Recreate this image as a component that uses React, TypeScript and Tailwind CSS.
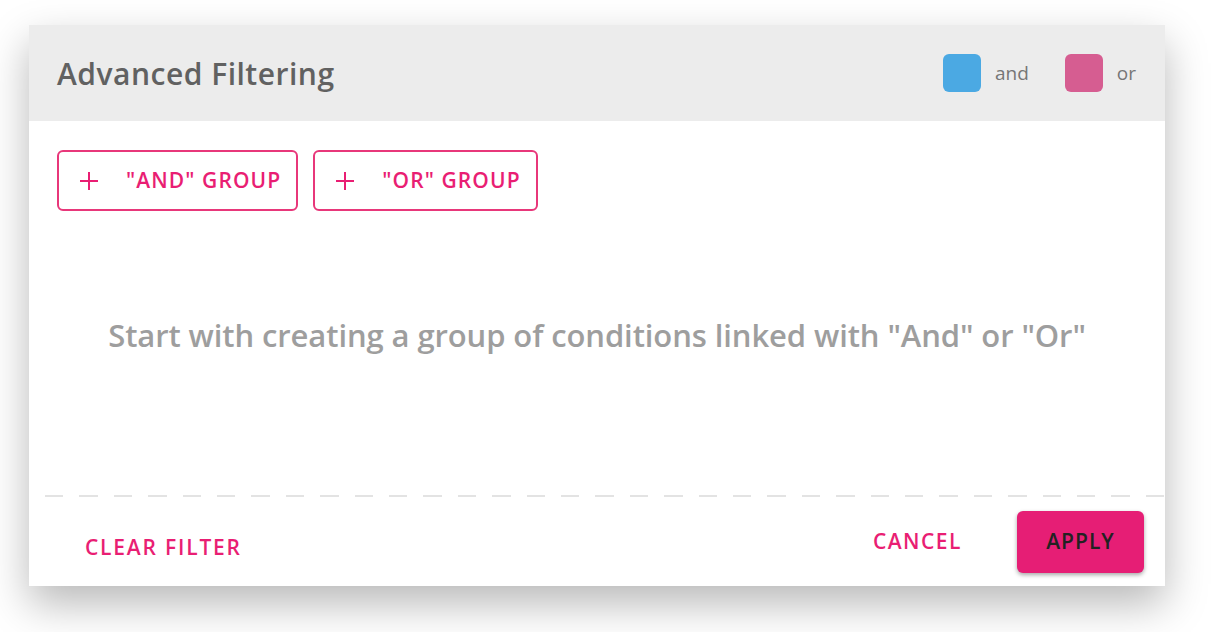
import React from 'react';

const font = { fontFamily: '"Open Sans", "Noto Sans", sans-serif' };

const PlusIcon = () => (
  <svg width="18" height="18" viewBox="0 0 18 18" className="shrink-0">
    <path d="M9 0v18M0 9h18" stroke="currentColor" strokeWidth="2" />
  </svg>
);

const GroupButton = ({ label }: { label: string }) => (
  <button className="flex items-center h-[61px] pl-[21px] pr-[15px] border-2 border-[#e8377a] rounded-[6px] text-[#e91e73] bg-white">
    <PlusIcon />
    <span className="ml-[28px] text-[21px] font-semibold tracking-[1.1px] leading-none">{label}</span>
  </button>
);

export default function App() {
  return (
    <div className="w-[1220px] h-[632px] bg-white pl-[29px] pt-[25px] overflow-hidden" style={font}>
      <div className="w-[1136px] h-[561px] bg-white flex flex-col shadow-[0_18px_40px_rgba(0,0,0,0.28)]">
        {/* header */}
        <div className="h-[96px] bg-[#ececec] flex items-center pl-[28px] pr-[29px]">
          <h1 className="text-[30px] font-semibold text-[#616161] tracking-[0.5px]">Advanced Filtering</h1>
          <div className="ml-auto flex items-center">
            <span className="w-[38px] h-[38px] rounded-[6px] bg-[#4ba9e3]" />
            <span className="ml-[14px] text-[19px] text-[#767676]">and</span>
            <span className="ml-[36px] w-[38px] h-[38px] rounded-[6px] bg-[#d65d91]" />
            <span className="ml-[14px] text-[19px] text-[#767676]">or</span>
          </div>
        </div>

        {/* body */}
        <div className="flex-1 flex flex-col px-[28px] pt-[29px]">
          <div className="flex gap-[15px]">
            <GroupButton label={'"AND" GROUP'} />
            <GroupButton label={'"OR" GROUP'} />
          </div>
          <p className="mt-[101px] text-center text-[31px] font-semibold text-[#9e9e9e] tracking-[-0.1px]">
            Start with creating a group of conditions linked with "And" or "Or"
          </p>
        </div>

        {/* dashed divider */}
        <div className="h-[2px] bg-[repeating-linear-gradient(90deg,transparent_0_16px,#e3e3e3_16px_34.4px)]" />

        {/* footer */}
        <div className="h-[89px] flex items-center pl-[56px] pr-[21px]">
          <button className="mt-[12px] text-[21px] font-semibold tracking-[1.8px] text-[#e91e73]">CLEAR FILTER</button>
          <button className="ml-auto text-[21px] font-semibold tracking-[1.5px] text-[#e91e73]">CANCEL</button>
          <button className="ml-[55px] w-[127px] h-[62px] rounded-[6px] bg-[#e61e75] text-[#222] text-[21px] font-semibold tracking-[1px] shadow-[0_2px_4px_rgba(0,0,0,0.35)]">
            APPLY
          </button>
        </div>
      </div>
    </div>
  );
}
